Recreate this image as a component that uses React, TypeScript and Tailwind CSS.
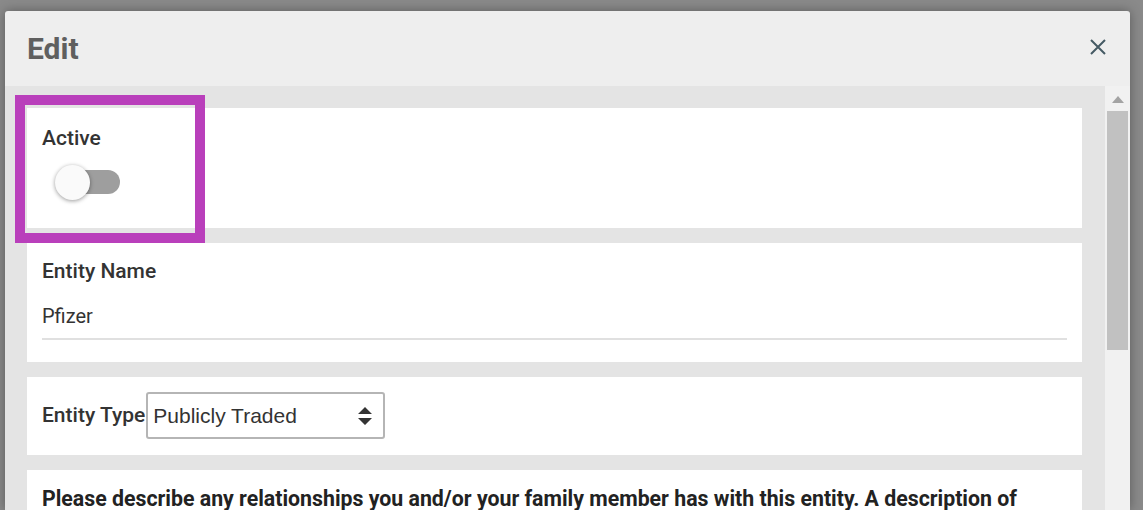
export default function App() {
  return (
    <div className="relative h-[510px] w-full overflow-hidden bg-[#8a8a8a] pt-[11px] pl-[5px] pr-[13px] font-['Roboto',sans-serif] text-[#333]">
      <div className="h-full rounded-t-[3px] bg-[#eeeeee] shadow-[0_0_12px_rgba(0,0,0,0.35)] flex flex-col">
        <header className="h-[75px] shrink-0 flex items-center justify-between pl-[22px] pr-[24px]">
          <h2 className="text-[30px] font-bold text-[#5f5f5f] leading-none">Edit</h2>
          <svg width="16" height="16" viewBox="0 0 16 16" className="mb-[4px]">
            <path d="M1 1 L15 15 M15 1 L1 15" stroke="#455a64" strokeWidth="2" fill="none" />
          </svg>
        </header>

        <div className="flex flex-1 bg-[#e4e4e4] min-h-0">
          <div className="flex-1 flex flex-col gap-[15px] pt-[22px] pl-[22px] pr-[23px]">
            <section className="bg-white h-[120px] shrink-0 px-[15px] pt-[17px]">
              <p className="text-[21px] font-medium leading-[27px]">Active</p>
              <div className="relative mt-[13px] ml-[13px] w-[68px] h-[35px]">
                <div className="absolute left-[5px] top-[5px] w-[60px] h-[24px] rounded-full bg-[#9e9e9e]" />
                <div className="absolute left-0 top-0 w-[35px] h-[35px] rounded-full bg-[#fafafa] shadow-[0_1px_4px_rgba(0,0,0,0.4)]" />
              </div>
            </section>

            <section className="bg-white h-[119px] shrink-0 px-[15px] pt-[15px]">
              <p className="text-[21px] font-medium leading-[27px]">Entity Name</p>
              <div className="mt-[18px] border-b-2 border-[#e0e0e0] pb-[8px]">
                <span className="text-[20px] leading-[27px] text-[#333]">Pfizer</span>
              </div>
            </section>

            <section className="bg-white h-[78px] shrink-0 px-[15px] pt-[15px] flex items-start">
              <span className="text-[21px] font-medium leading-[47px]">Entity Type</span>
              <div className="ml-[1px] w-[239px] h-[47px] border-2 border-[#b5b5b5] rounded-[3px] flex items-center justify-between pl-[5px] pr-[10px]">
                <span className="font-['Liberation_Sans',Arial,sans-serif] text-[21px] text-[#333]">Publicly Traded</span>
                <svg width="16" height="20" viewBox="0 0 16 20">
                  <path d="M8 1 L15 8 L1 8 Z M1 12 L15 12 L8 19 Z" fill="#333" />
                </svg>
              </div>
            </section>

            <section className="bg-white flex-1 px-[15px] pt-[15px]">
              <p className="text-[21.3px] font-bold leading-[27px] text-[#222]">
                Please describe any relationships you and/or your family member has with this entity. A description of
              </p>
            </section>
          </div>

          <div className="w-[25px] shrink-0 bg-[#f1f1f1] flex flex-col items-center pt-[10px]">
            <svg width="12" height="7" viewBox="0 0 12 7">
              <path d="M6 0 L12 7 L0 7 Z" fill="#a3a3a3" />
            </svg>
            <div className="mt-[8px] w-[21px] h-[239px] bg-[#c1c1c1]" />
          </div>
        </div>
      </div>

      <div className="absolute left-[15px] top-[95px] w-[190px] h-[148px] border-[10px] border-[#b93fbb]" />
    </div>
  );
}
